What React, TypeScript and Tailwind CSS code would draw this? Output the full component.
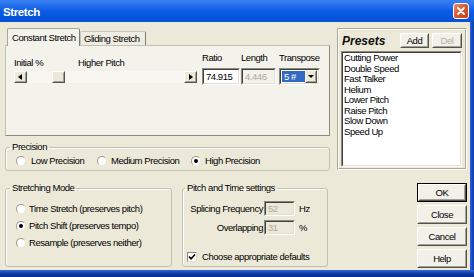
import React from "react";
import clsx from "clsx";

const presets = [
  "Cutting Power",
  "Double Speed",
  "Fast Talker",
  "Helium",
  "Lower Pitch",
  "Raise Pitch",
  "Slow Down",
  "Speed Up",
];

function Sunken({
  className,
  inner,
  children,
}: {
  className?: string;
  inner?: string;
  children?: React.ReactNode;
}) {
  return (
    <div
      className={clsx(
        "flex border border-[#8c8a80] border-b-white border-r-white",
        className
      )}
    >
      <div
        className={clsx(
          "flex flex-1 min-w-0 border border-[#404040] border-b-[#e2dfd0] border-r-[#e2dfd0]",
          inner
        )}
      >
        {children}
      </div>
    </div>
  );
}

function Btn({
  label,
  className,
  disabled,
  isDefault,
}: {
  label: string;
  className?: string;
  disabled?: boolean;
  isDefault?: boolean;
}) {
  return (
    <div className={clsx("flex", isDefault && "border border-black", className)}>
      <div className="flex flex-1 border border-white border-b-[#55544c] border-r-[#55544c]">
        <div className="flex flex-1 items-center justify-center border border-transparent border-b-[#a3a196] border-r-[#a3a196] bg-[#f1f0e9]">
          <span className={disabled ? "text-[#b4b2a4]" : "text-black"}>{label}</span>
        </div>
      </div>
    </div>
  );
}

function Radio({ checked }: { checked?: boolean }) {
  return (
    <span className="flex items-center justify-center w-[10px] h-[10px] shrink-0 rounded-full bg-white border border-[#9c9a8e] border-b-[#e8e6da] border-r-[#e8e6da]">
      {checked && <span className="w-[4px] h-[4px] rounded-full bg-black" />}
    </span>
  );
}

function Arrow({ dir }: { dir: "left" | "right" | "down" }) {
  const pts =
    dir === "left" ? "5,1 5,7 1,4" : dir === "right" ? "2,1 2,7 6,4" : "1,2 7,2 4,5";
  return (
    <svg width="8" height="8" viewBox="0 0 8 8">
      <polygon points={pts} fill="#000" />
    </svg>
  );
}

function ScrollBtn({ children, className }: { children?: React.ReactNode; className?: string }) {
  return (
    <div className={clsx("flex w-[13px] h-[12px] border border-white border-b-[#55544c] border-r-[#55544c] bg-[#ece9d8]", className)}>
      <div className="flex flex-1 items-center justify-center border border-transparent border-b-[#a3a196] border-r-[#a3a196]">
        {children}
      </div>
    </div>
  );
}

function GroupBox({
  title,
  className,
  children,
  legendClass,
}: {
  title: string;
  className?: string;
  children?: React.ReactNode;
  legendClass?: string;
}) {
  return (
    <fieldset
      className={clsx(
        "border border-[#c2c0b2] rounded-[3px] shadow-[inset_1px_1px_0_#fff]",
        className
      )}
    >
      <legend className={clsx("px-[2px] h-[12px] leading-[12px]", legendClass ?? "ml-[4px]")}>
        {title}
      </legend>
      {children}
    </fieldset>
  );
}

export default function App() {
  return (
    <div className="w-[474px] h-[277px] flex flex-col overflow-hidden whitespace-nowrap bg-[#ece9d8] text-black text-[9.5px] tracking-[-0.45px] leading-[12px] font-['Liberation_Sans',sans-serif]">
      {/* title bar */}
      <div className="h-[22px] shrink-0 flex items-center pl-[3px] pr-[5px] bg-gradient-to-b from-[#3a82f2] via-[#0a5ce6] to-[#0650d6]">
        <span className="text-white font-bold text-[11.5px] tracking-[-0.4px] leading-[14px] pt-[1px]">Stretch</span>
        <div className="ml-auto w-[16px] h-[16px] rounded-[3px] border border-white flex items-center justify-center bg-gradient-to-br from-[#eb8a6a] via-[#d8582f] to-[#bf3d18]">
          <svg width="10" height="10" viewBox="0 0 10 10">
            <path d="M2 2 L8 8 M8 2 L2 8" stroke="#fff" strokeWidth="1.8" strokeLinecap="round" />
          </svg>
        </div>
      </div>

      <div className="flex flex-1 min-h-0">
        <div className="flex flex-1 pl-[5px] pt-[6px] gap-[7px]">
          {/* left column */}
          <div className="flex flex-col w-[325px]">
            {/* tabs */}
            <div className="flex items-end h-[17px] pl-[2px] relative z-10">
              <div className="w-[73px] h-[18px] -mb-px flex items-center pl-[4px] bg-[#f3f2eb] border border-b-0 border-[#a9a89c] border-r-[#7d7c72] rounded-t-[2px]">
                Constant Stretch
              </div>
              <div className="w-[66px] h-[14px] flex items-center pl-[3px] bg-[#efede3] border border-b-0 border-[#c9c7b9] border-r-[#7d7c72] rounded-t-[2px]">
                Gliding Stretch
              </div>
            </div>
            <div className="h-[91px] flex pl-[8px] pt-[6px] bg-[#f3f2eb] border border-[#c3c1b3] border-b-[#8b8a80] border-r-[#8b8a80]">
              <div className="flex flex-col w-[183px] pt-[5px]">
                <div className="flex h-[12px]">
                  <span className="w-[64px]">Initial %</span>
                  <span>Higher Pitch</span>
                </div>
                <div className="mt-[2px] h-[12px] flex bg-[#f7f6f1]">
                  <ScrollBtn>
                    <Arrow dir="left" />
                  </ScrollBtn>
                  <ScrollBtn className="ml-[25px]" />
                  <ScrollBtn className="ml-auto">
                    <Arrow dir="right" />
                  </ScrollBtn>
                </div>
              </div>
              <div className="flex ml-[5px]">
                <div className="flex flex-col w-[38px]">
                  <span className="h-[12px]">Ratio</span>
                  <Sunken className="mt-[4px] h-[17px]" inner="bg-white items-center pl-[2px]">
                    74.915
                  </Sunken>
                </div>
                <div className="flex flex-col w-[35px] ml-[1px]">
                  <span className="h-[12px]">Length</span>
                  <Sunken className="mt-[4px] h-[17px]" inner="items-center pl-[2px] text-[#aca899]">
                    4.446
                  </Sunken>
                </div>
                <div className="flex flex-col w-[41px] ml-[3px]">
                  <span className="h-[12px]">Transpose</span>
                  <Sunken className="mt-[4px] h-[17px]" inner="bg-white items-center pl-[1px] pr-[1px]">
                    <span className="w-[24px] h-[11px] flex items-center pl-[2px] bg-[#316ac5] text-white">
                      5 #
                    </span>
                    <ScrollBtn className="ml-auto w-[11px] h-[13px]">
                      <Arrow dir="down" />
                    </ScrollBtn>
                  </Sunken>
                </div>
              </div>
            </div>

            {/* precision */}
            <GroupBox title="Precision" className="mt-[5px] h-[30px]">
              <div className="flex items-center h-[12px] mt-[2px] pl-[10px]">
                <div className="flex items-center w-[81px] gap-[5px]">
                  <Radio />
                  <span>Low Precision</span>
                </div>
                <div className="flex items-center w-[94px] gap-[4px]">
                  <Radio />
                  <span>Medium Precision</span>
                </div>
                <div className="flex items-center gap-[4px]">
                  <Radio checked />
                  <span>High Precision</span>
                </div>
              </div>
            </GroupBox>

            {/* bottom row */}
            <div className="flex mt-[11px] gap-[10px]">
              <GroupBox title="Stretching Mode" className="w-[167px] h-[85px]">
                <div className="flex flex-col gap-[5px] pt-[9px] pl-[10px]">
                  <div className="flex items-center h-[12px] gap-[3px]">
                    <Radio />
                    <span>Time Stretch (preserves pitch)</span>
                  </div>
                  <div className="flex items-center h-[12px] gap-[3px]">
                    <Radio checked />
                    <span>Pitch Shift (preserves tempo)</span>
                  </div>
                  <div className="flex items-center h-[12px] gap-[3px]">
                    <Radio />
                    <span>Resample (preserves neither)</span>
                  </div>
                </div>
              </GroupBox>
              <GroupBox title="Pitch and Time settings" className="w-[146px] h-[85px]" legendClass="ml-[2px]">
                <div className="flex flex-col pt-[7px]">
                  <div className="flex items-center h-[15px] pl-[6px]">
                    <span className="w-[74px] text-right">Splicing Frequency</span>
                    <Sunken className="ml-[1px] w-[31px] h-[15px]" inner="items-center pl-[2px] text-[#aca899]">
                      52
                    </Sunken>
                    <span className="ml-[4px]">Hz</span>
                  </div>
                  <div className="flex items-center h-[15px] pl-[6px] mt-[4px]">
                    <span className="w-[74px] text-right">Overlapping</span>
                    <Sunken className="ml-[1px] w-[31px] h-[15px]" inner="items-center pl-[2px] text-[#aca899]">
                      31
                    </Sunken>
                    <span className="ml-[4px]">%</span>
                  </div>
                  <div className="flex items-center h-[12px] mt-[16px] pl-[4px] gap-[5px]">
                    <span className="flex items-center justify-center w-[10px] h-[10px] bg-white border border-[#8c8a80] border-b-[#e2dfd0] border-r-[#e2dfd0]">
                      <svg width="8" height="8" viewBox="0 0 8 8">
                        <path d="M1 3.5 L3 5.8 L7 1.5" stroke="#000" strokeWidth="1.6" fill="none" />
                      </svg>
                    </span>
                    <span>Choose appropriate defaults</span>
                  </div>
                </div>
              </GroupBox>
            </div>
          </div>

          {/* right column */}
          <div className="flex flex-col w-[130px]">
            <div className="h-[142px] flex border border-[#aca899] border-b-white border-r-white">
              <div className="flex flex-col flex-1 border border-white border-b-[#aca899] border-r-[#aca899]">
                <div className="flex items-center h-[15px] mt-[3px] pl-[3px] pr-[3px]">
                  <span className="font-bold italic text-[12px] tracking-[0px] text-[#111]">
                    Presets
                  </span>
                  <Btn label="Add" className="ml-auto w-[29px] h-[15px]" />
                  <Btn label="Del" className="ml-[3px] w-[30px] h-[15px]" disabled />
                </div>
                <Sunken className="ml-[2px] mt-[3px] w-[121px] h-[116px]" inner="bg-white flex-col pl-[1px]">
                  {presets.map((p) => (
                    <span key={p} className="leading-[10.5px]">
                      {p}
                    </span>
                  ))}
                </Sunken>
              </div>
            </div>
            <div className="flex flex-col items-end gap-[3px] mt-[13px]">
              <Btn label="OK" isDefault className="w-[50px] h-[19px]" />
              <Btn label="Close" className="w-[50px] h-[19px]" />
              <Btn label="Cancel" className="w-[50px] h-[19px]" />
              <Btn label="Help" className="w-[50px] h-[19px]" />
            </div>
          </div>
        </div>
        <div className="w-[4px] shrink-0 bg-gradient-to-r from-[#2b62dc] to-[#0b37a8]" />
      </div>
      <div className="h-[7px] shrink-0 bg-gradient-to-b from-[#3567d4] via-[#0c3aa8] to-[#0a2a88]" />
    </div>
  );
}
